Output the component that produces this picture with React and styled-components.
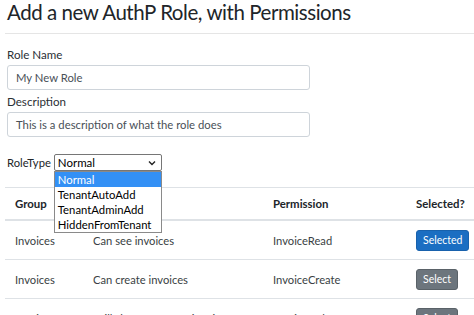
import styled, { createGlobalStyle } from "styled-components";

const GlobalStyle = createGlobalStyle`
  body {
    margin: 0;
    background: #fff;
    font-family: "Lato", "Open Sans", sans-serif;
    color: #212529;
    overflow: hidden;
  }
`;

const Page = styled.div`
  padding: 0 0 0 5px;
  width: 469px;
  height: 315px;
  overflow: hidden;
`;

const Title = styled.h2`
  margin: 0;
  padding: 0 0 0 2px;
  font-size: 20.5px;
  letter-spacing: -0.45px;
  font-weight: 400;
  line-height: 25px;
  color: #212529;
`;

const Rule = styled.hr`
  margin: 8px 0 0;
  border: none;
  border-top: 1px solid #e5e5e5;
`;

const Field = styled.div`
  display: flex;
  flex-direction: column;
  padding-left: 2px;
  margin-top: ${({ $top }) => $top || 0}px;
`;

const Label = styled.label`
  font-size: 11.6px;
  line-height: 16px;
  margin-bottom: 2px;
  color: #2b3035;
`;

const Input = styled.div`
  width: 303px;
  height: 25px;
  box-sizing: border-box;
  border: 1px solid #ced4da;
  border-radius: 3px;
  padding: 0 8px;
  display: flex;
  align-items: center;
  font-size: 11.3px;
  color: #495057;
`;

const TypeRow = styled.div`
  display: flex;
  align-items: center;
  gap: 3px;
  padding-left: 2px;
  margin-top: 17px;
  font-size: 11.2px;
`;

const SelectWrap = styled.div`
  position: relative;
`;

const Select = styled.div`
  width: 108px;
  height: 17px;
  box-sizing: border-box;
  border: 1px solid #767676;
  border-radius: 2px;
  display: flex;
  align-items: center;
  justify-content: space-between;
  padding: 0 5px 0 3px;
  font-size: 11.5px;
  color: #000;
`;

const Options = styled.ul`
  position: absolute;
  left: 0;
  top: 17px;
  width: 108px;
  margin: 0;
  padding: 0;
  list-style: none;
  box-sizing: border-box;
  border: 1px solid #8a8a8a;
  background: #fff;
  z-index: 2;
`;

const Option = styled.li`
  height: 15px;
  line-height: 15px;
  padding-left: 3px;
  font-size: 11.3px;
  color: ${({ $active }) => ($active ? "#fff" : "#000")};
  background: ${({ $active }) => ($active ? "#3390f5" : "transparent")};
`;

const Table = styled.table`
  margin-top: 16px;
  width: 469px;
  border-collapse: collapse;
  table-layout: fixed;
  font-size: 11.2px;
`;

const Th = styled.th`
  text-align: left;
  font-weight: 700;
  font-size: 11.4px;
  height: 31px;
  padding: 0 10px;
  border-top: 1px solid #dee2e6;
  border-bottom: 2px solid #dee2e6;
`;

const Td = styled.td`
  height: 38px;
  padding: 0 10px;
  border-bottom: 1px solid #dee2e6;
  color: #3a3f44;
  white-space: nowrap;
  overflow: hidden;
`;

const Button = styled.button`
  font-family: inherit;
  font-size: 10.5px;
  height: 21px;
  padding: 0 6px;
  border: 1px solid ${({ $on }) => ($on ? "#1861ac" : "#5a6268")};
  border-radius: 3px;
  color: #fff;
  background: ${({ $on }) => ($on ? "#1b6ec2" : "#6c757d")};
`;

const Chevron = () => (
  <svg width="8" height="6" viewBox="0 0 8 6">
    <path d="M1 1.5 L4 4.5 L7 1.5" fill="none" stroke="#222" strokeWidth="1.4" />
  </svg>
);

const rows = [
  { group: "Invoices", desc: "Can see invoices", perm: "InvoiceRead", on: true },
  { group: "Invoices", desc: "Can create invoices", perm: "InvoiceCreate", on: false },
  { group: "Invoices", desc: "Will show a page of invoices", perm: "InvoiceDelete", on: false },
];

const App = () => {
  return (
    <>
      <GlobalStyle />
      <Page>
        <Title>Add a new AuthP Role, with Permissions</Title>
        <Rule />
        <Field $top={13}>
          <Label>Role Name</Label>
          <Input>My New Role</Input>
        </Field>
        <Field $top={4}>
          <Label>Description</Label>
          <Input>This is a description of what the role does</Input>
        </Field>
        <TypeRow>
          <span>RoleType</span>
          <SelectWrap>
            <Select>
              Normal
              <Chevron />
            </Select>
            <Options>
              <Option $active>Normal</Option>
              <Option>TenantAutoAdd</Option>
              <Option>TenantAdminAdd</Option>
              <Option>HiddenFromTenant</Option>
            </Options>
          </SelectWrap>
        </TypeRow>
        <Table>
          <colgroup>
            <col style={{ width: 78 }} />
            <col style={{ width: 180 }} />
            <col style={{ width: 143 }} />
            <col style={{ width: 68 }} />
          </colgroup>
          <thead>
            <tr>
              <Th>Group</Th>
              <Th></Th>
              <Th>Permission</Th>
              <Th>Selected?</Th>
            </tr>
          </thead>
          <tbody>
            {rows.map((r, i) => (
              <tr key={i}>
                <Td>{r.group}</Td>
                <Td>{r.desc}</Td>
                <Td>{r.perm}</Td>
                <Td>
                  <Button $on={r.on}>{r.on ? "Selected" : "Select"}</Button>
                </Td>
              </tr>
            ))}
          </tbody>
        </Table>
      </Page>
    </>
  );
};

export default App;
